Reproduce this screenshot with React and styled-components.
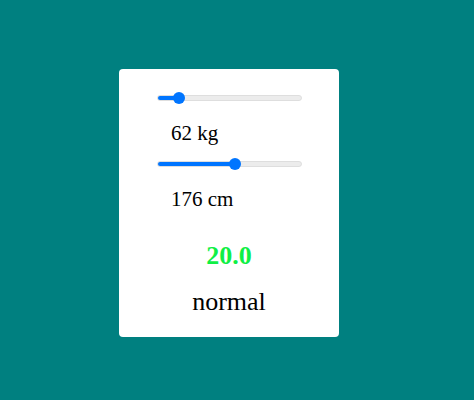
import React, { useState } from "react";
import styled, { createGlobalStyle, css } from "styled-components";

const Global = createGlobalStyle`
  html, body { margin: 0; padding: 0; background: #008080; }
  body { font-family: "Liberation Serif", "Times New Roman", serif; }
`;

const Page = styled.div`
  min-height: 400px;
  box-sizing: border-box;
  padding: 69px 0 0 119px;
`;

const Card = styled.div`
  width: 220px;
  box-sizing: border-box;
  background: #ffffff;
  border-radius: 4px;
  padding: 21px 0 20px 38px;
  display: flex;
  flex-direction: column;
`;

const thumb = css`
  width: 12px;
  height: 12px;
  border-radius: 50%;
  background: #0075ff;
  border: none;
`;

const Slider = styled.input`
  -webkit-appearance: none;
  appearance: none;
  display: block;
  width: 145px;
  height: 16px;
  margin: 0;
  margin-top: ${(p) => p.$gap || 0}px;
  background: transparent;
  outline: none;

  &::-webkit-slider-runnable-track {
    height: 6px;
    border-radius: 3px;
    box-sizing: border-box;
    border: 1px solid #dedede;
    background: linear-gradient(
      to right,
      #0075ff 0,
      #0075ff var(--fill),
      #ececec var(--fill),
      #ececec 100%
    );
  }
  &::-webkit-slider-thumb {
    -webkit-appearance: none;
    ${thumb};
    margin-top: -4px;
  }
`;

const Label = styled.div`
  font-size: 21px;
  line-height: 24px;
  padding-left: 14px;
  margin-top: 15px;
  color: #000;
`;

const Result = styled.div`
  font-size: 26px;
  line-height: 30px;
  font-weight: bold;
  color: ${(p) => p.$color};
  text-align: center;
  margin: 30px 0 0 -38px;
`;

const Status = styled.div`
  font-size: 26px;
  line-height: 30px;
  color: #000;
  text-align: center;
  margin: 16px 0 0 -38px;
`;

function Range({ min, max, value, onChange, gap }) {
  const frac = (value - min) / (max - min);
  const px = 6 + frac * (145 - 12);
  return (
    <Slider
      type="range"
      min={min}
      max={max}
      value={value}
      $gap={gap}
      style={{ "--fill": `${px}px` }}
      onChange={(e) => onChange(+e.target.value)}
    />
  );
}

export default function App() {
  const [weight, setWeight] = useState(62);
  const [height, setHeight] = useState(176);
  const bmi = weight / ((height / 100) * (height / 100));
  const status = bmi < 18.5 ? "underweight" : bmi < 25 ? "normal" : bmi < 30 ? "overweight" : "obese";
  return (
    <>
      <Global />
      <Page>
        <Card>
          <Range min={50} max={156} value={weight} onChange={setWeight} />
          <Label>{weight} kg</Label>
          <Range gap={11} min={100} max={240} value={height} onChange={setHeight} />
          <Label>{height} cm</Label>
          <Result $color="#0fef45">{bmi.toFixed(1)}</Result>
          <Status>{status}</Status>
        </Card>
      </Page>
    </>
  );
}
